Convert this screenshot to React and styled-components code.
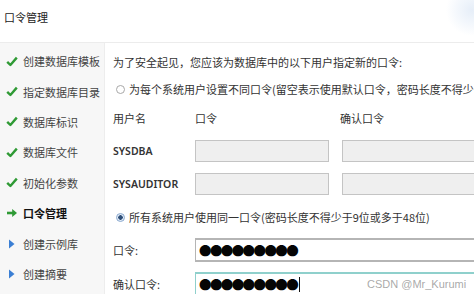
import React from 'react';
import styled, { createGlobalStyle } from 'styled-components';

const GlobalStyle = createGlobalStyle`
  html, body {
    margin: 0;
    padding: 0;
    background: #ffffff;
  }
  body {
    font-family: "Noto Sans CJK SC", "Noto Sans", sans-serif;
    color: #333333;
  }
`;

const Window = styled.div`
  position: relative;
  width: 474px;
  height: 295px;
  overflow: hidden;
  background: #ffffff;
`;

const Header = styled.div`
  height: 43px;
  box-sizing: border-box;
  padding: 9px 0 0 4px;
  font-size: 11px;
  color: #222;
  border-bottom: 1px solid #ececec;
  background: radial-gradient(circle at 472px 10px, #e6eef8 0, #f3f7fc 14px, rgba(255, 255, 255, 0) 26px);
`;

const Body = styled.div`
  display: flex;
  height: 251px;
`;

const Sidebar = styled.div`
  width: 105px;
  flex: none;
  box-sizing: border-box;
  padding-top: 3px;
  background: #f7f7f7;
  border-right: 1px solid #ededed;
`;

const Step = styled.div`
  display: flex;
  align-items: center;
  gap: 5px;
  height: 30.4px;
  padding-left: 6px;
  font-size: 11px;
  white-space: nowrap;
  color: ${(p) => (p.$current ? '#111' : '#444')};
  font-weight: ${(p) => (p.$current ? 700 : 400)};
`;

const IconBox = styled.span`
  display: flex;
  align-items: center;
  justify-content: center;
  width: 12px;
  height: 12px;
`;

const Content = styled.div`
  flex: 1;
  min-width: 0;
  padding: 4px 0 0 8px;
  overflow: hidden;
  font-size: 11px;
  white-space: nowrap;
`;

const Line = styled.div`
  display: flex;
  align-items: center;
  gap: 4px;
  height: ${(p) => p.$h}px;
  color: #333;
`;

const Radio = styled.span`
  flex: none;
  box-sizing: border-box;
  width: 9px;
  height: 9px;
  margin-left: 3px;
  border-radius: 50%;
  border: 1px solid ${(p) => (p.$checked ? '#8aa9cf' : '#a8a8a8')};
  background: ${(p) => (p.$checked ? 'radial-gradient(circle, #2f4f78 0 2px, #e3ecf7 2.5px)' : '#fff')};
`;

const UserGrid = styled.div`
  display: grid;
  grid-template-columns: 82px 145px 1fr;
  grid-template-rows: 34px 32px 34px;
  align-items: center;
`;

const ColHead = styled.div`
  color: #333;
`;

const UserName = styled.div`
  font-family: "Noto Sans", "DejaVu Sans", sans-serif;
  font-weight: 600;
  font-size: 10.5px;
  color: #333;
`;

const DisabledInput = styled.div`
  box-sizing: border-box;
  height: 22px;
  background: #efefef;
  border: 1px solid #c4c4c4;
  width: ${(p) => (p.$last ? 'auto' : '134px')};
  margin: ${(p) => (p.$last ? '0 -20px 0 2px' : '0')};
`;

const FieldRow = styled.div`
  display: grid;
  grid-template-columns: 82px 1fr;
  align-items: center;
  height: 34px;
`;

const PasswordBox = styled.div`
  display: flex;
  align-items: center;
  box-sizing: border-box;
  height: 24px;
  margin-right: -20px;
  padding-left: 3px;
  background: #fff;
  border: 1px solid ${(p) => (p.$focus ? '#8fd0cc' : '#b5b5b5')};
  border-top-width: 2px;
  border-bottom-width: 2px;
`;

const Dots = styled.span`
  font-family: "Noto Sans CJK SC", sans-serif;
  font-size: 12.5px;
  letter-spacing: -1.6px;
  color: #050505;
`;

const Caret = styled.span`
  width: 1px;
  height: 15px;
  margin-left: 2px;
  background: #111;
`;

const Watermark = styled.div`
  position: absolute;
  left: 367px;
  top: 278px;
  font-family: "Liberation Sans", Arial, sans-serif;
  font-size: 11px;
  color: rgba(140, 140, 140, 0.75);
  white-space: nowrap;
`;

const Check = () => (
  <svg width="12" height="11" viewBox="0 0 12 11">
    <path d="M1.2 5.8 L4.4 9 L10.8 1.6" fill="none" stroke="#2f9a35" strokeWidth="2.4" strokeLinejoin="round" />
  </svg>
);

const Arrow = () => (
  <svg width="12" height="10" viewBox="0 0 12 10">
    <path d="M1 5 H8" stroke="#2f9a35" strokeWidth="2.6" />
    <path d="M6.2 1 L11 5 L6.2 9 Z" fill="#2f9a35" />
  </svg>
);

const Triangle = () => (
  <svg width="12" height="10" viewBox="0 0 12 10">
    <path d="M3 0.5 L8.5 5 L3 9.5 Z" fill="#3b7fd4" />
  </svg>
);

const steps = [
  { label: '创建数据库模板', state: 'done' },
  { label: '指定数据库目录', state: 'done' },
  { label: '数据库标识', state: 'done' },
  { label: '数据库文件', state: 'done' },
  { label: '初始化参数', state: 'done' },
  { label: '口令管理', state: 'current' },
  { label: '创建示例库', state: 'todo' },
  { label: '创建摘要', state: 'todo' },
];

const users = ['SYSDBA', 'SYSAUDITOR'];

const App = () => {
  return (
    <Window>
      <GlobalStyle />
      <Header>口令管理</Header>
      <Body>
        <Sidebar>
          {steps.map((s) => (
            <Step key={s.label} $current={s.state === 'current'}>
              <IconBox>
                {s.state === 'done' && <Check />}
                {s.state === 'current' && <Arrow />}
                {s.state === 'todo' && <Triangle />}
              </IconBox>
              {s.label}
            </Step>
          ))}
        </Sidebar>
        <Content>
          <Line $h={30}>为了安全起见，您应该为数据库中的以下用户指定新的口令:</Line>
          <Line $h={24}>
            <Radio />
            为每个系统用户设置不同口令(留空表示使用默认口令，密码长度不得少于9位或多于48位)
          </Line>
          <UserGrid>
            <ColHead>用户名</ColHead>
            <ColHead>口令</ColHead>
            <ColHead>确认口令</ColHead>
            {users.map((u) => (
              <React.Fragment key={u}>
                <UserName>{u}</UserName>
                <DisabledInput />
                <DisabledInput $last />
              </React.Fragment>
            ))}
          </UserGrid>
          <Line $h={32}>
            <Radio $checked />
            所有系统用户使用同一口令(密码长度不得少于9位或多于48位)
          </Line>
          <FieldRow>
            <span>口令:</span>
            <PasswordBox>
              <Dots>●●●●●●●●●</Dots>
            </PasswordBox>
          </FieldRow>
          <FieldRow>
            <span>确认口令:</span>
            <PasswordBox $focus>
              <Dots>●●●●●●●●●</Dots>
              <Caret />
            </PasswordBox>
          </FieldRow>
        </Content>
      </Body>
      <Watermark>CSDN @Mr_Kurumi</Watermark>
    </Window>
  );
};

export default App;
